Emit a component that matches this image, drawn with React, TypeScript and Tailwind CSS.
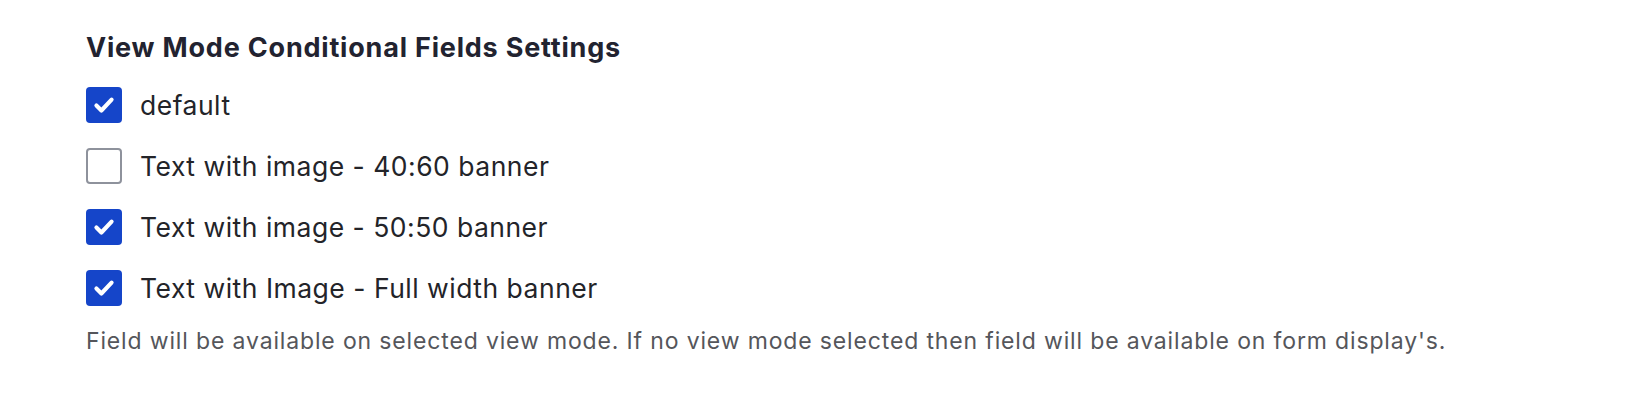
import React from 'react'

interface ViewModeOption {
  id: string
  label: string
  checked: boolean
}

const options: ViewModeOption[] = [
  { id: 'default', label: 'default', checked: true },
  { id: 'text-40-60', label: 'Text with image - 40:60 banner', checked: false },
  { id: 'text-50-50', label: 'Text with image - 50:50 banner', checked: true },
  { id: 'text-full', label: 'Text with Image - Full width banner', checked: true },
]

const CheckMark = () => (
  <svg viewBox="0 0 24 24" className="h-[26px] w-[26px]" fill="none">
    <path d="M5 12.5l4.6 4.6L19 7" stroke="white" strokeWidth="3.8" strokeLinecap="round" strokeLinejoin="round" />
  </svg>
)

export default function App() {
  const [state, setState] = React.useState(options)

  const toggle = (id: string) =>
    setState(prev => prev.map(o => (o.id === id ? { ...o, checked: !o.checked } : o)))

  return (
    <div className="min-h-[412px] w-full bg-white pl-[86px] pt-[33px]" style={{ fontFamily: 'Inter, "Noto Sans", sans-serif' }}>
      <h2 className="text-[27px] font-bold leading-[30px] tracking-[0.8px] text-[#222330]">View Mode Conditional Fields Settings</h2>

      <div className="mt-[24px] flex flex-col gap-[25px]">
        {state.map(opt => (
          <label key={opt.id} className="flex cursor-pointer items-center gap-[18px]" onClick={() => toggle(opt.id)}>
            {opt.checked ? (
              <span className="flex h-[36px] w-[36px] items-center justify-center rounded-[4px] bg-[#1545c9]">
                <CheckMark />
              </span>
            ) : (
              <span className="h-[36px] w-[36px] rounded-[4px] border-2 border-[#8e929c] bg-white" />
            )}
            <span className="text-[26.5px] leading-[36px] tracking-[0.5px] text-[#232429]">{opt.label}</span>
          </label>
        ))}
      </div>

      <p className="mt-[22px] text-[23px] leading-[26px] tracking-[0.85px] text-[#55565b]">
        Field will be available on selected view mode. If no view mode selected then field will be available on form display's.
      </p>
    </div>
  )
}
